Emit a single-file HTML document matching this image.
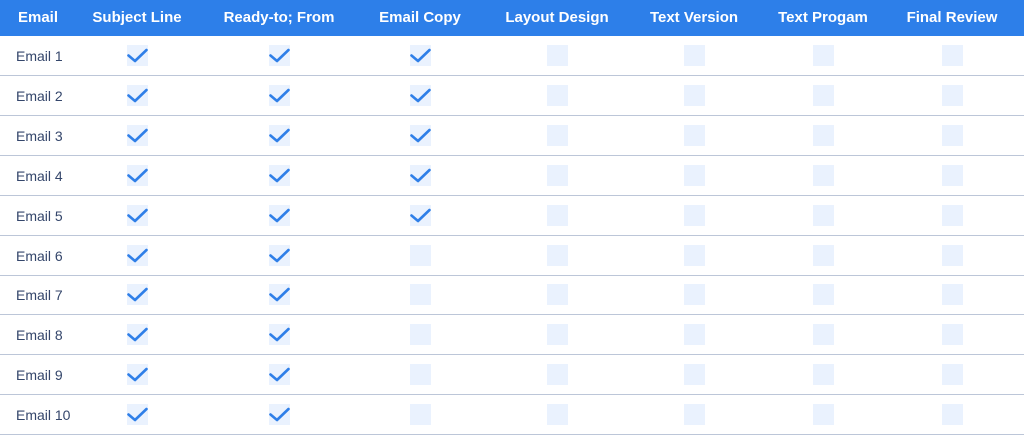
<!DOCTYPE html><html><head><style>
body{margin:0;width:1024px;height:435px;background:#fff;font-family:"Liberation Sans",sans-serif;overflow:hidden;position:relative}
.h{position:absolute;top:0;left:0;width:1024px;height:36px;background:#2d7fe9}
.h span{position:absolute;top:9px;color:#fff;font-weight:bold;font-size:15px;transform:translateX(-50%);white-space:nowrap}
.r{position:absolute;left:0;width:1024px;height:39px;border-bottom:1.5px solid #bcc6d8}
.r .t{position:absolute;left:16px;top:12px;font-size:14px;color:#34466b}
.b{position:absolute;top:9px;width:21px;height:21px;background:#eaf2fe;margin-left:-10px}
.b svg{position:absolute;left:0;top:0}
</style></head><body>
<div class="h">
<span style="left:38px">Email</span><span style="left:137px">Subject Line</span><span style="left:279px">Ready-to; From</span><span style="left:420px">Email Copy</span><span style="left:557px">Layout Design</span><span style="left:694px">Text Version</span><span style="left:823px">Text Progam</span><span style="left:952px">Final Review</span>
</div>
<div id="rows"></div>
<script>
var xs=[137,279,420,557,694,823,952],html='';
for(var i=0;i<10;i++){var yy=36+i*39.9;html+='<div class="r" style="top:'+yy+'px"><div class="t">Email '+(i+1)+'</div>';
for(var j=0;j<7;j++){var c=(j<2)||(j==2&&i<5);html+='<div class="b" style="left:'+xs[j]+'px">'+(c?'<svg width="21" height="21"><path d="M1.5 10.5 L8 16 L19.5 5" fill="none" stroke="#2f7fe8" stroke-width="2.6" stroke-linecap="round" stroke-linejoin="round"/></svg>':'')+'</div>';}
html+='</div>';}
document.getElementById('rows').innerHTML=html;
</script>
</body></html>
